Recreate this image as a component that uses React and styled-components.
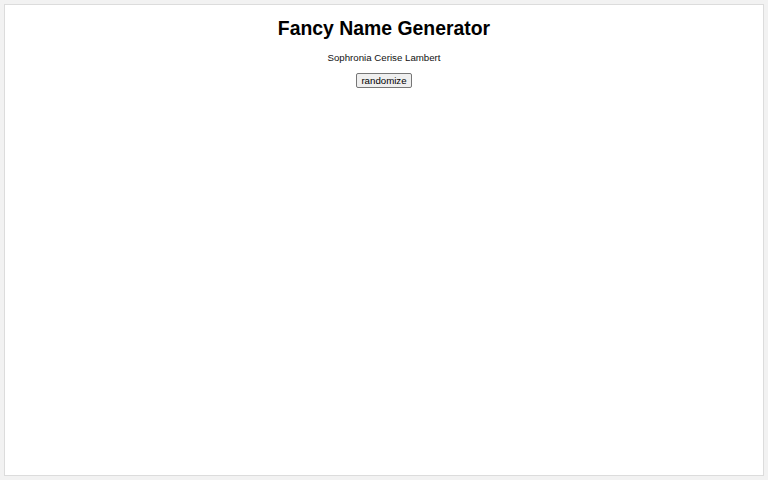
import { useState } from 'react';
import styled, { createGlobalStyle } from 'styled-components';

const Global = createGlobalStyle`
    html, body {
        margin: 0;
        padding: 0;
        height: 100%;
        background: #f2f2f2;
        font-family: "Liberation Sans", Arial, sans-serif;
    }
    #root {
        height: 100%;
    }
`

const Page = styled.div`
    box-sizing: border-box;
    height: 100vh;
    padding: 4px;
`

const Card = styled.main`
    box-sizing: border-box;
    height: 100%;
    background: #fff;
    border: 1px solid #dcdcdc;
    display: flex;
    flex-direction: column;
    align-items: center;
    padding-top: 12px;
`

const Title = styled.h1`
    margin: 0;
    font-size: 19.4px;
    font-weight: 700;
    color: #000;
    line-height: 23px;
`

const Name = styled.p`
    margin: 12px 0 0;
    font-size: 9.7px;
    color: #111;
    line-height: 12px;
`

const Button = styled.button`
    margin-top: 9px;
    font-family: "Liberation Sans", Arial, sans-serif;
    font-size: 9.7px;
    line-height: 12px;
    padding: 1px 4px 0;
    color: #000;
    background: #efefef;
    border: 1px solid #767676;
    border-radius: 2px;
    cursor: pointer;
`

const first = ['Sophronia', 'Clementine', 'Evangeline', 'Theodora', 'Rosalind'];
const middle = ['Cerise', 'Marguerite', 'Celeste', 'Isolde', 'Verity'];
const last = ['Lambert', 'Ashford', 'Whitmore', 'Beaumont', 'Fairfax'];

const pick = (list) => list[Math.floor(Math.random() * list.length)];

function App() {
    const [name, setName] = useState('Sophronia Cerise Lambert');

    return (
        <Page>
            <Global />
            <Card>
                <Title>Fancy Name Generator</Title>
                <Name>{name}</Name>
                <Button onClick={() => setName(`${pick(first)} ${pick(middle)} ${pick(last)}`)}>
                    randomize
                </Button>
            </Card>
        </Page>
    );
}

export default App;
